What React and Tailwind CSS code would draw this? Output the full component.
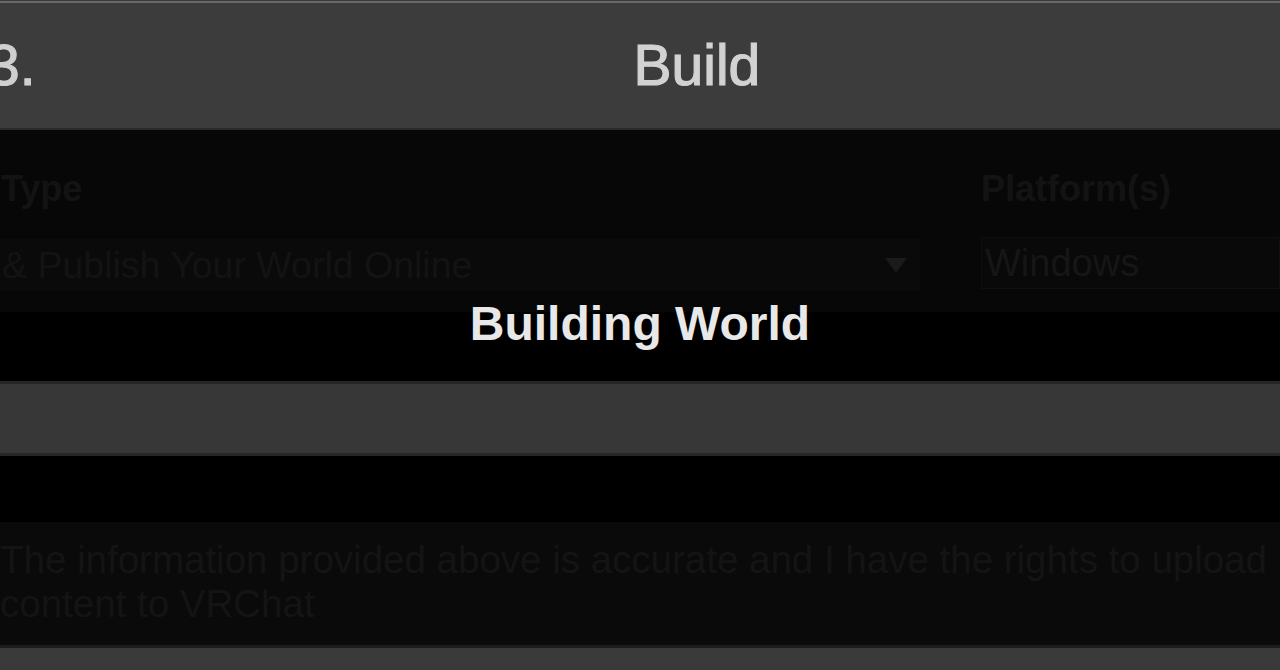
import React from 'react';

const sans = "font-['Liberation_Sans',Arial,sans-serif]";

function Header() {
  return (
    <div className="shrink-0">
      <div className="h-px bg-[#3b3b3b]" />
      <div className="h-[2px] bg-[#686868]" />
      <div className="h-[127px] bg-[#3c3c3c] border-b-2 border-[#2a2a2a] flex items-center">
        <span className="-ml-[12px] text-[57px] leading-none text-[#cfcfcf] [-webkit-text-stroke:1.2px_#cfcfcf]">3.</span>
        <span className="ml-[598px] text-[57px] leading-none text-[#d2d2d2] [-webkit-text-stroke:1.2px_#d2d2d2]">Build</span>
      </div>
    </div>
  );
}

function BuildOptions() {
  return (
    <div className="h-[182px] shrink-0 bg-[#070707] pt-[41px] grid grid-cols-[920px_1fr] gap-x-[61px]">
      <div className="flex flex-col">
        <div className="h-[36px] pl-[1px] text-[36px] leading-[36px] font-bold text-[#131313]">Type</div>
        <div className="mt-[32px] h-[52px] bg-[#0a0a0a] flex items-center justify-between pl-[2px] pr-[13px]">
          <span className="text-[37.5px] leading-[52px] text-[#131313]">&amp; Publish Your World Online</span>
          <svg width="22" height="15" viewBox="0 0 22 15">
            <path d="M0 0 L22 0 L11 15 Z" fill="#1a1a1a" />
          </svg>
        </div>
      </div>
      <div className="flex flex-col">
        <div className="h-[36px] text-[36px] leading-[36px] font-bold text-[#131313]">Platform(s)</div>
        <div className="mt-[30px] h-[52px] bg-[#090909] border border-[#0f0f0f] flex items-center pl-[3px]">
          <span className="text-[38px] leading-[50px] text-[#161616]">Windows</span>
        </div>
      </div>
    </div>
  );
}

function Progress() {
  return (
    <div className="h-[210px] shrink-0 bg-black flex flex-col">
      <div className="-mt-[12px] h-[48px] text-center text-[48px] leading-[48px] font-bold text-[#e8e8e8]">
        Building World
      </div>
      <div className="mt-[33px] h-[75px] bg-[#373737] border-y-[3px] border-[#262626]" />
    </div>
  );
}

function Agreement() {
  return (
    <div className="h-[123px] shrink-0 bg-[#0a0a0a] pt-[16px]">
      <p className="w-[1280px] text-[38.5px] leading-[44px] text-[#141414]">
        The information provided above is accurate and I have the rights to upload content to VRChat
      </p>
    </div>
  );
}

export default function App() {
  return (
    <div className={`w-[1280px] h-[670px] overflow-hidden bg-[#070707] flex flex-col ${sans}`}>
      <Header />
      <BuildOptions />
      <Progress />
      <Agreement />
      <div className="h-[3px] shrink-0 bg-[#1c1c1c]" />
      <div className="flex-1 bg-[#3a3a3a]" />
    </div>
  );
}
